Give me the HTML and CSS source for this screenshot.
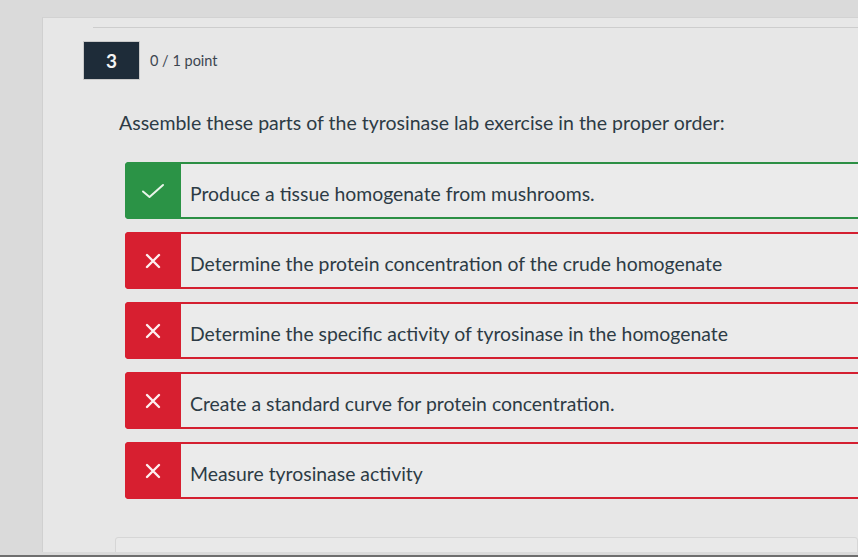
FILE: index.html
```html
<!DOCTYPE html>
<html lang="en">
<head>
<meta charset="utf-8">
<title>Quiz results</title>
<link rel="stylesheet" href="styles.css">
</head>
<body>
<div class="frame">
  <main class="panel">
    <div class="rule"></div>
    <section class="question">
      <header class="q-head">
        <span class="q-num">3</span>
        <span class="q-score">0 / 1 point</span>
      </header>
      <p class="q-text">Assemble these parts of the tyrosinase lab exercise in the proper order:</p>
      <ol class="answers">
        <li class="answer correct">
          <span class="mark">
            <svg width="26" height="18" viewBox="0 0 26 18"><path d="M3 9.5 L9.5 15 L23 3" fill="none" stroke="#e9f5ea" stroke-width="2" stroke-linecap="round" stroke-linejoin="round"/></svg>
          </span>
          <span class="label">Produce a tissue homogenate from mushrooms.</span>
        </li>
        <li class="answer wrong">
          <span class="mark">
            <svg width="16" height="16" viewBox="0 0 16 16"><path d="M2 2 L14 14 M14 2 L2 14" fill="none" stroke="#fdf0f0" stroke-width="2.4" stroke-linecap="round"/></svg>
          </span>
          <span class="label">Determine the protein concentration of the crude homogenate</span>
        </li>
        <li class="answer wrong">
          <span class="mark">
            <svg width="16" height="16" viewBox="0 0 16 16"><path d="M2 2 L14 14 M14 2 L2 14" fill="none" stroke="#fdf0f0" stroke-width="2.4" stroke-linecap="round"/></svg>
          </span>
          <span class="label">Determine the speciﬁc activity of tyrosinase in the homogenate</span>
        </li>
        <li class="answer wrong">
          <span class="mark">
            <svg width="16" height="16" viewBox="0 0 16 16"><path d="M2 2 L14 14 M14 2 L2 14" fill="none" stroke="#fdf0f0" stroke-width="2.4" stroke-linecap="round"/></svg>
          </span>
          <span class="label">Create a standard curve for protein concentration.</span>
        </li>
        <li class="answer wrong">
          <span class="mark">
            <svg width="16" height="16" viewBox="0 0 16 16"><path d="M2 2 L14 14 M14 2 L2 14" fill="none" stroke="#fdf0f0" stroke-width="2.4" stroke-linecap="round"/></svg>
          </span>
          <span class="label">Measure tyrosinase activity</span>
        </li>
      </ol>
      <div class="next-box"></div>
    </section>
  </main>
</div>
</body>
</html>
```
FILE: styles.css
```css
* { box-sizing: border-box; }

html, body {
  margin: 0;
  height: 100%;
}

body {
  background: #d9d9d9;
  font-family: Lato, "Open Sans", sans-serif;
  color: #2d3b45;
  overflow: hidden;
}

.frame {
  height: 557px;
  padding: 17px 0 3px 42px;
  background: #dadada;
  border-bottom: 2px solid #6e6e6e;
}

.panel {
  height: 100%;
  background: #e7e7e7;
  border-left: 1px solid #d0d0d0;
  border-top: 1px solid #d2d2d2;
  overflow: hidden;
}

.rule {
  margin: 9px 0 0 50px;
  height: 1px;
  background: #cdcdcd;
}

.question {
  padding: 13px 0 0 40px;
}

.q-head {
  display: flex;
  align-items: center;
  gap: 10px;
}

.q-num {
  width: 57px;
  height: 39px;
  background: #1e2c39;
  color: #f4f4f4;
  font-weight: 700;
  font-size: 19px;
  display: flex;
  align-items: center;
  justify-content: center;
  border: 1px solid #c9c9c9;
}

.q-score {
  font-size: 14.5px;
  color: #3c4650;
}

.q-text {
  margin: 31px 0 0 36px;
  font-size: 19.5px;
  color: #2d3b45;
}

.answers {
  list-style: none;
  margin: 28px 0 0 42px;
  padding: 0;
  display: flex;
  flex-direction: column;
  gap: 13px;
}

.answer {
  display: flex;
  height: 57px;
  border: 2px solid;
  border-right: 0;
  border-radius: 4px 0 0 4px;
  background: #ebebeb;
}

.answer.correct { border-color: #2c8f44; }
.answer.wrong { border-color: #d41f30; }

.mark {
  width: 56px;
  flex: none;
  display: flex;
  align-items: center;
  justify-content: center;
  margin: -2px 0 -2px -2px;
  border-radius: 4px 0 0 4px;
}

.correct .mark { background: #2b9346; }
.wrong .mark { background: #d71f30; }

.label {
  display: flex;
  align-items: center;
  padding: 6px 0 0 9px;
  font-size: 19.4px;
  color: #2d3b45;
}

.next-box {
  margin: 38px 0 0 32px;
  height: 40px;
  border: 1px solid #d6d6d6;
  border-radius: 3px;
  background: #e9e9e9;
}
```
